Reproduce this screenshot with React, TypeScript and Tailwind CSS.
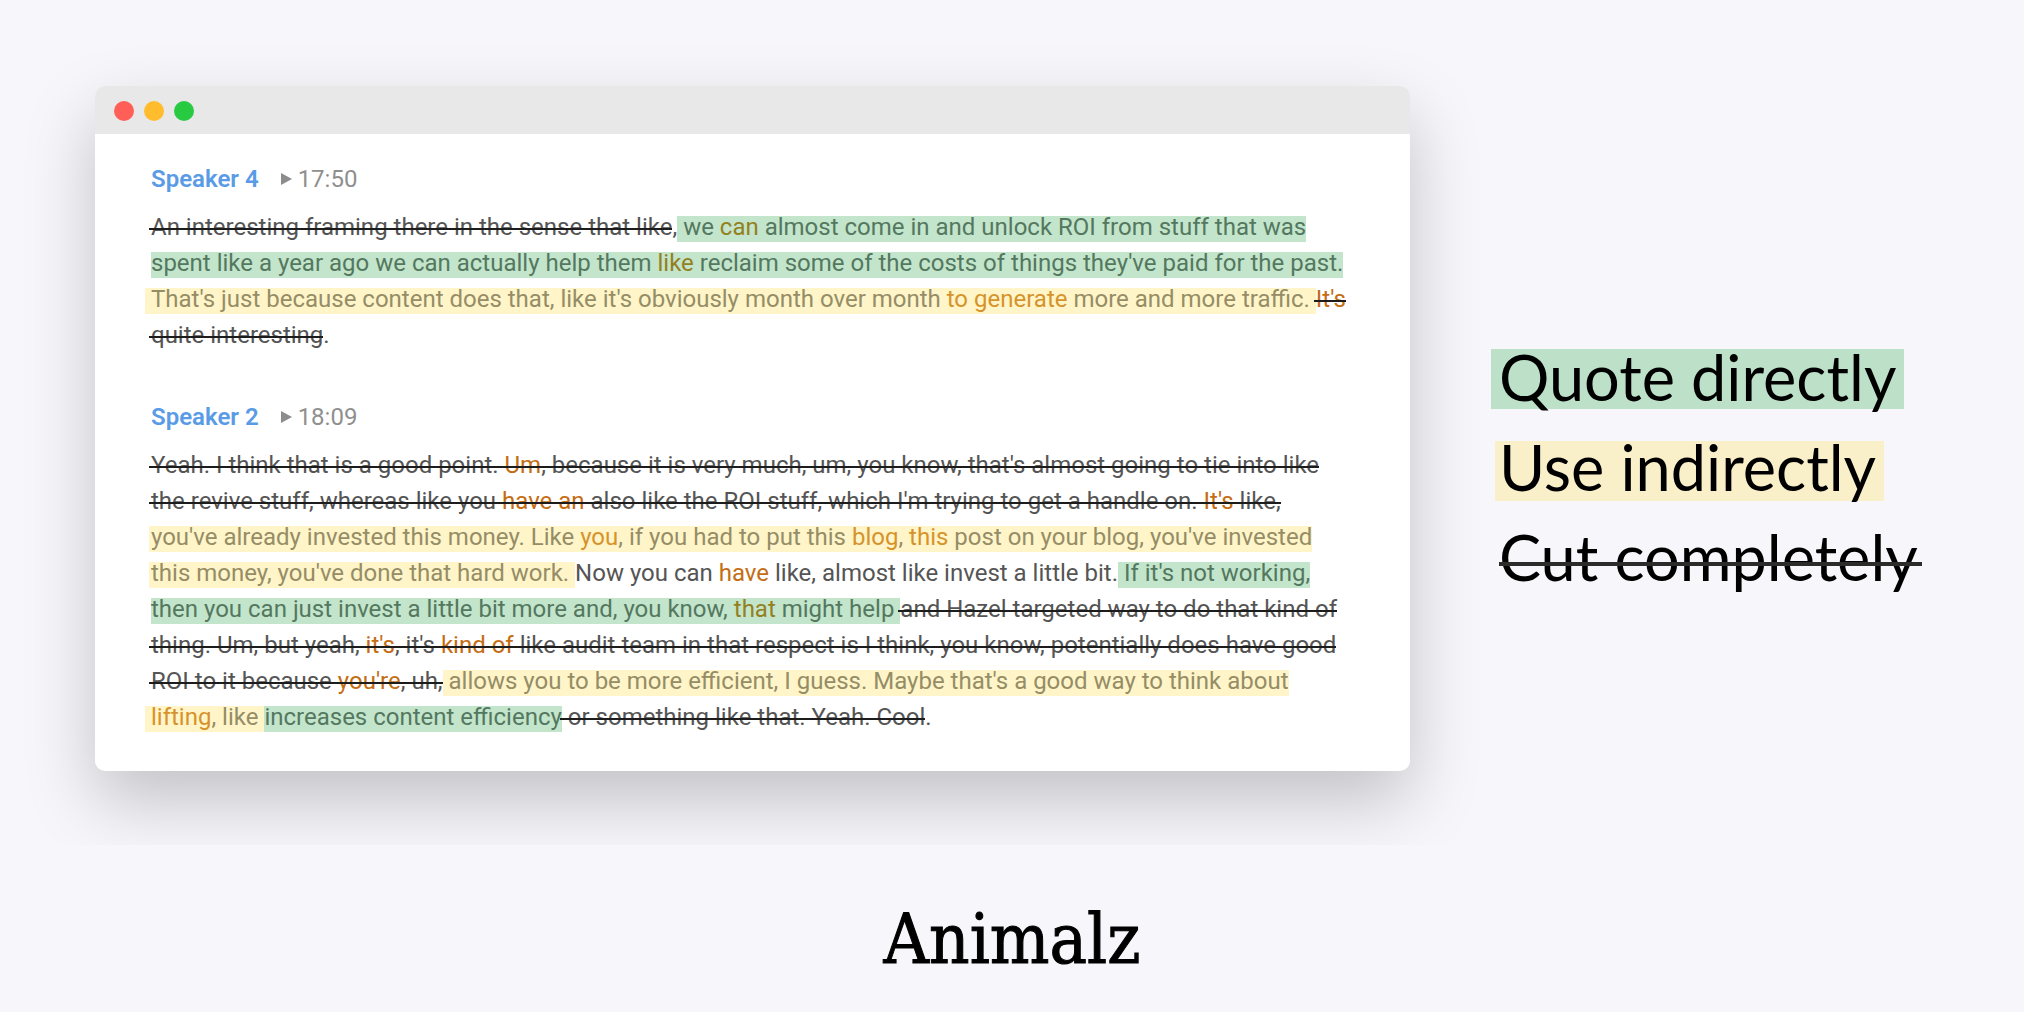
import React from 'react';

type Props = { children: React.ReactNode; className?: string };

const mark = 'inline-block whitespace-pre leading-[22px] pb-1';

const Quote = ({ children, className = '' }: Props) => (
  <mark className={`${mark} bg-[#c3e5cb] text-[#54785f] ${className}`}>{children}</mark>
);

const Use = ({ children, className = '' }: Props) => (
  <mark className={`${mark} bg-[#fff5c9] text-[#958d66] ${className}`}>{children}</mark>
);

const Cut = ({ children, className = '' }: Props) => (
  <s
    className={`relative inline-block whitespace-pre no-underline after:absolute after:-left-0.5 after:right-0 after:top-[19px] after:h-0.5 after:bg-[#1c1c1c] ${className}`}
  >
    {children}
  </s>
);

// Words the transcriber was unsure about
const Unsure = ({ children }: Props) => <span className="text-[#c46d14]">{children}</span>;
const UnsureQuote = ({ children }: Props) => <span className="text-[#93801f]">{children}</span>;
const UnsureUse = ({ children }: Props) => <span className="text-[#d6932b]">{children}</span>;

const Line = ({ children }: Props) => <span className="block h-9 whitespace-pre">{children}</span>;

function Speaker({ name, time, children }: { name: string; time: string; children: React.ReactNode }) {
  return (
    <section>
      <header className="flex items-center leading-9">
        <h2 className="font-semibold text-[#5a9be6]">{name}</h2>
        <button className="ml-[22px] flex items-center gap-1.5 text-[#8f8f8f]">
          <svg viewBox="0 0 11 12" className="w-[11px] h-3 fill-[#8c8c8c]">
            <path d="M0 0L11 6L0 12Z" />
          </svg>
          {time}
        </button>
      </header>
      <p className="mt-3 leading-9 text-[#555555]">{children}</p>
    </section>
  );
}

function TranscriptWindow() {
  return (
    <div className="flex-1 rounded-[10px] bg-white shadow-[0_30px_70px_rgba(0,0,0,0.21)]">
      <div className="flex items-center gap-2.5 h-12 pl-[19px] pt-0.5 rounded-t-[10px] bg-[#e8e8e8]">
        <span className="w-5 h-5 rounded-full bg-[#ff5f57]" />
        <span className="w-5 h-5 rounded-full bg-[#ffbd2e]" />
        <span className="w-5 h-5 rounded-full bg-[#28ca42]" />
      </div>

      <div className="flex flex-col gap-[46px] pl-14 pt-[27px] pb-9 text-[24px] font-['Roboto',sans-serif]">
        <Speaker name="Speaker 4" time="17:50">
          <Line>
            <Cut>An interesting framing there in the sense that like</Cut>,
            <Quote> we <UnsureQuote>can</UnsureQuote> almost come in and unlock ROI from stuff that was</Quote>
          </Line>
          <Line>
            <Quote>spent like a year ago we can actually help them <UnsureQuote>like</UnsureQuote> reclaim some of the costs of things they've paid for the past.</Quote>
          </Line>
          <Line>
            <Use className="-ml-1.5 pl-1.5">That's just because content does that, like it's obviously month over month <UnsureUse>to generate</UnsureUse> more and more traffic. </Use>
            <Cut><Unsure>It's</Unsure></Cut>
          </Line>
          <Line>
            <Cut>quite interesting</Cut>.
          </Line>
        </Speaker>

        <Speaker name="Speaker 2" time="18:09">
          <Line>
            <Cut>Yeah. I think that is a good point. <Unsure>Um</Unsure>, because it is very much, um, you know, that's almost going to tie into like</Cut>
          </Line>
          <Line>
            <Cut>the revive stuff, whereas like you <Unsure>have an</Unsure> also like the ROI stuff, which I'm trying to get a handle on. <Unsure>It's</Unsure> like,</Cut>
          </Line>
          <Line>
            <Use className="-ml-0.5 pl-0.5">you've already invested this money. Like <UnsureUse>you</UnsureUse>, if you had to put this <UnsureUse>blog</UnsureUse>, <UnsureUse>this</UnsureUse> post on your blog, you've invested</Use>
          </Line>
          <Line>
            <Use className="-ml-0.5 pl-0.5">this money, you've done that hard work. </Use>
            Now you can <Unsure>have</Unsure> like, almost like invest a little bit.
            <Quote> If it's not working,</Quote>
          </Line>
          <Line>
            <Quote>then you can just invest a little bit more and, you know, <UnsureQuote>that</UnsureQuote> might help </Quote>
            <Cut>and Hazel targeted way to do that kind of</Cut>
          </Line>
          <Line>
            <Cut>thing. Um, but yeah, <Unsure>it's</Unsure>, it's <Unsure>kind of</Unsure> like audit team in that respect is I think, you know, potentially does have good</Cut>
          </Line>
          <Line>
            <Cut>ROI to it because <Unsure>you're</Unsure>, uh,</Cut>
            <Use> allows you to be more efficient, I guess. Maybe that's a good way to think about</Use>
          </Line>
          <Line>
            <Use className="-ml-1.5 pl-1.5"><UnsureUse>lifting</UnsureUse>, like </Use>
            <Quote>increases content efficiency</Quote>
            <Cut> or something like that. Yeah. Cool</Cut>.
          </Line>
        </Speaker>
      </div>
    </div>
  );
}

function Legend() {
  return (
    <ul className="flex flex-col items-start w-[436px] shrink-0 pt-[263px] text-[63px] text-black whitespace-nowrap font-['Lato',sans-serif]">
      <li className="h-[92px]">
        <mark className="block h-[60px] pl-2 pr-2 leading-[56px] bg-[#bde0c8] text-black">Quote directly</mark>
      </li>
      <li className="h-[88px] pl-1">
        <mark className="block h-[60px] pl-1 pr-2 leading-[52px] bg-[#f9efc8] text-black">Use indirectly</mark>
      </li>
      <li className="pl-2">
        <s className="relative block h-[60px] pr-1 leading-[56px] no-underline after:absolute after:inset-x-0 after:top-[33px] after:h-1 after:bg-[#2b2b2b]">
          Cut completely
        </s>
      </li>
    </ul>
  );
}

export default function App() {
  return (
    <div className="min-h-screen bg-[#f6f6fb]">
      <main className="flex items-start gap-[81px] overflow-hidden pt-[86px] pb-[74px] pl-[95px] pr-[97px]">
        <TranscriptWindow />
        <Legend />
      </main>
      <footer className="flex justify-center pt-[52px] text-[70px] leading-[84px] text-black [-webkit-text-stroke:1px_black] font-['DejaVu_Serif_Condensed','DejaVu_Serif',serif]">
        Animalz
      </footer>
    </div>
  );
}
